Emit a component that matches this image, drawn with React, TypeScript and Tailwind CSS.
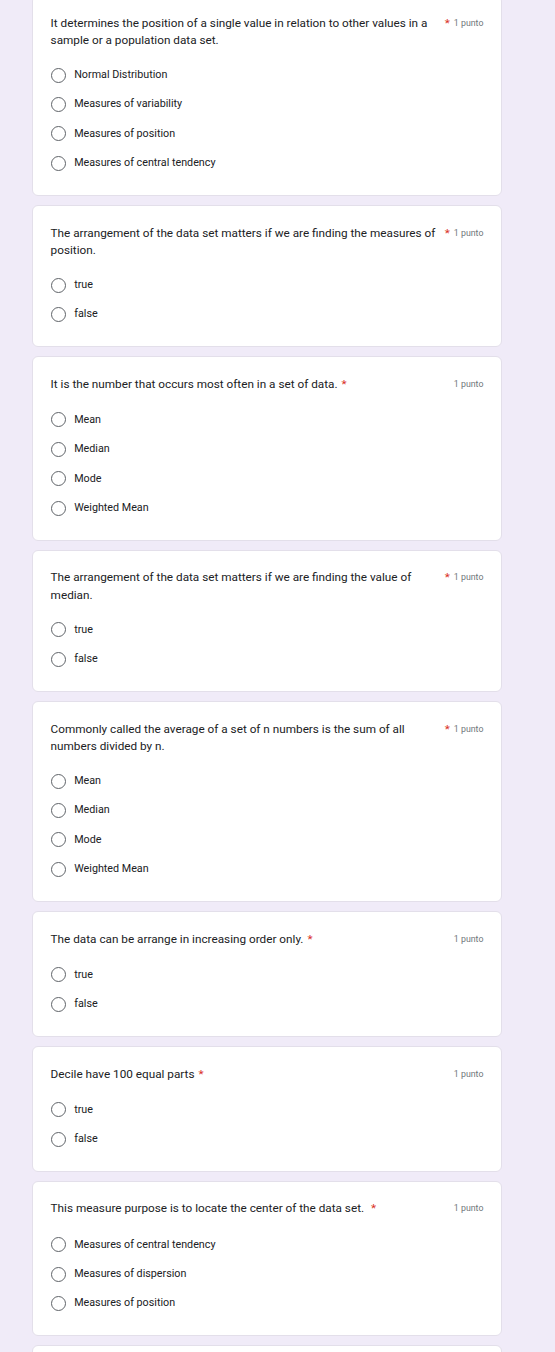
import React from "react";

type Q = { q: string; opts: string[] };

const questions: Q[] = [
  {
    q: "It determines the position of a single value in relation to other values in a sample or a population data set.",
    opts: ["Normal Distribution", "Measures of variability", "Measures of position", "Measures of central tendency"],
  },
  {
    q: "The arrangement of the data set matters if we are finding the measures of position.",
    opts: ["true", "false"],
  },
  {
    q: "It is the number that occurs most often in a set of data.",
    opts: ["Mean", "Median", "Mode", "Weighted Mean"],
  },
  {
    q: "The arrangement of the data set matters if we are finding the value of median.",
    opts: ["true", "false"],
  },
  {
    q: "Commonly called the average of a set of n numbers is the sum of all numbers divided by n.",
    opts: ["Mean", "Median", "Mode", "Weighted Mean"],
  },
  {
    q: "The data can be arrange in increasing order only.",
    opts: ["true", "false"],
  },
  {
    q: "Decile have 100 equal parts",
    opts: ["true", "false"],
  },
  {
    q: "This measure purpose is to locate the center of the data set. ",
    opts: ["Measures of central tendency", "Measures of dispersion", "Measures of position"],
  },
];

function Card({ q, opts }: Q) {
  return (
    <div className="w-[470px] rounded-[6px] border border-[#e3dfea] bg-white px-[17.6px] pt-[18.6px] pb-[17px]">
      <div className="flex items-start justify-between">
        <div className="flex min-w-0 flex-1 items-start text-[11.75px] leading-[17.6px] text-[#202124] min-h-[19px]">
          <span className="min-w-0 whitespace-pre-wrap">{q}</span>
          <span className="shrink-0 pl-[4px] text-[#d93025]">*</span>
        </div>
        <div className="ml-[4px] shrink-0 text-[8.8px] leading-[17.6px] text-[#70757a]">1 punto</div>
      </div>
      <div className="mt-[10.6px] flex flex-col">
        {opts.map((o) => (
          <div key={o} className="flex h-[29.4px] items-center">
            <div className="h-[15px] w-[15px] shrink-0 rounded-full border-[1.5px] border-[#5f6368]" />
            <span className="ml-[8.6px] text-[10.75px] text-[#202124]">{o}</span>
          </div>
        ))}
      </div>
    </div>
  );
}

export default function App() {
  return (
    <div
      className="min-h-[1352px] bg-[#f0ebf8] pl-[32px]"
      style={{ fontFamily: "Roboto, 'Liberation Sans', Arial, sans-serif" }}
    >
      <div className="-mt-[5px] flex flex-col gap-[9px] pb-[20px]">
        {questions.map((x, i) => (
          <Card key={i} {...x} />
        ))}
        <div className="h-[150px] w-[470px] rounded-[6px] border border-[#e3dfea] bg-white" />
      </div>
    </div>
  );
}
